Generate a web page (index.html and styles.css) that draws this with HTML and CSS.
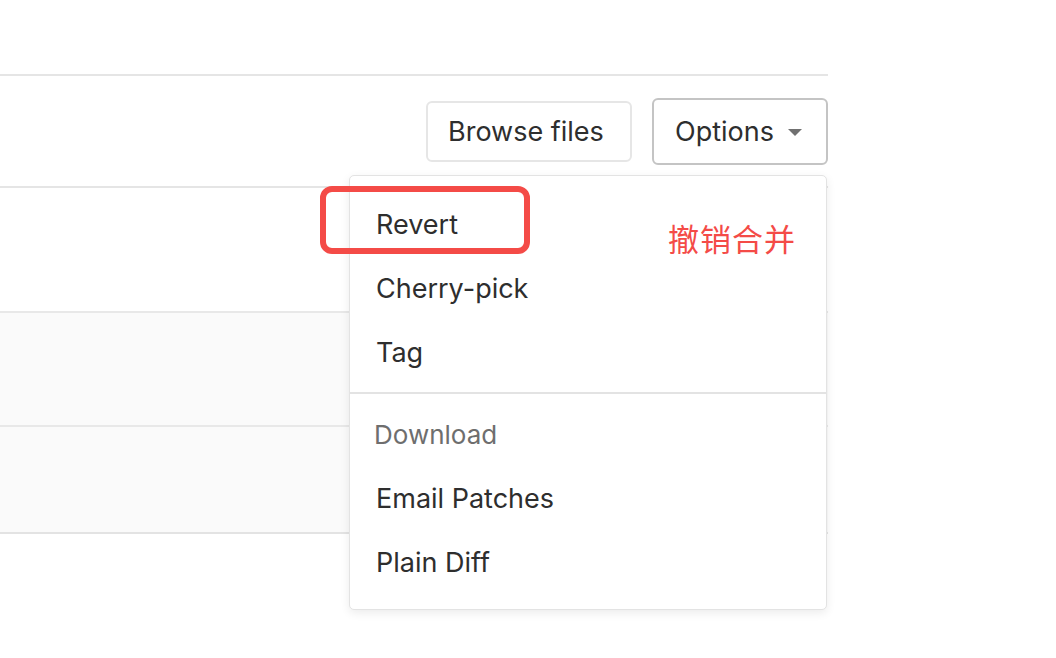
FILE: index.html
```html
<!DOCTYPE html>
<html lang="en">
<head>
<meta charset="utf-8">
<link rel="stylesheet" href="styles.css">
</head>
<body>
<div class="page">
  <div class="topbar"></div>
  <div class="toolbar">
    <button class="btn btn-browse">Browse files</button>
    <button class="btn btn-options">Options <span class="caret"></span></button>
  </div>
  <div class="row row-white"></div>
  <div class="row row-gray row-a"></div>
  <div class="row row-gray row-b"></div>

  <div class="dropdown">
    <ul class="menu">
      <li class="item">Revert</li>
      <li class="item">Cherry-pick</li>
      <li class="item">Tag</li>
    </ul>
    <div class="divider"></div>
    <ul class="menu">
      <li class="header">Download</li>
      <li class="item">Email Patches</li>
      <li class="item">Plain Diff</li>
    </ul>
  </div>

  <div class="highlight"></div>
  <div class="note">撤销合并</div>
</div>
</body>
</html>
```

FILE: styles.css
```css
html, body {
  margin: 0;
  padding: 0;
  background: #ffffff;
}
body {
  font-family: Inter, "Noto Sans", "Liberation Sans", sans-serif;
  color: #2e2e2e;
  width: 1056px;
  height: 658px;
  overflow: hidden;
}
.page {
  position: relative;
  width: 828px;
}
.topbar {
  height: 74px;
  border-bottom: 2px solid #e5e5e5;
}
.toolbar {
  display: flex;
  justify-content: flex-end;
  align-items: center;
  gap: 20px;
  height: 110px;
  border-bottom: 2px solid #e5e5e5;
}
.btn {
  font-family: inherit;
  font-size: 27px;
  color: #2e2e2e;
  background: #fff;
  border-radius: 6px;
  cursor: pointer;
  display: flex;
  align-items: center;
  margin: 0;
}
.btn-browse {
  width: 206px;
  height: 61px;
  border: 2px solid #e6e6e6;
  padding: 0 0 0 20px;
}
.btn-options {
  width: 176px;
  height: 67px;
  border: 2px solid #c4c4c4;
  padding: 0 0 0 21px;
}
.caret {
  display: inline-block;
  width: 0;
  height: 0;
  border-left: 7px solid transparent;
  border-right: 7px solid transparent;
  border-top: 7px solid #707070;
  margin-left: 14px;
  margin-top: 2px;
}
.row {
  border-bottom: 2px solid #e8e8e8;
}
.row-white {
  height: 123px;
}
.row-gray {
  background: #fafafa;
}
.row-a {
  height: 112px;
}
.row-b {
  height: 105px;
  border-bottom-color: #e3e3e3;
}
.dropdown {
  position: absolute;
  left: 349px;
  top: 175px;
  width: 476px;
  height: 417px;
  background: #fff;
  border: 1px solid #e3e3e3;
  border-radius: 5px;
  box-shadow: 0 3px 10px rgba(0, 0, 0, 0.08);
  padding-top: 16px;
  box-sizing: content-box;
}
.menu {
  list-style: none;
  margin: 0;
  padding: 0;
}
.item, .header {
  height: 64px;
  display: flex;
  align-items: center;
  padding-left: 26px;
  font-size: 27px;
  color: #2e2e2e;
}
.header {
  padding-left: 24px;
  font-size: 26px;
  color: #6e6e6e;
}
.divider {
  height: 2px;
  background: #e3e3e3;
  margin: 8px 0;
}
.highlight {
  position: absolute;
  left: 320px;
  top: 186px;
  width: 210px;
  height: 68px;
  box-sizing: border-box;
  border: 6px solid #f44b47;
  border-radius: 12px;
}
.note {
  position: absolute;
  left: 668px;
  top: 218px;
  font-family: "Noto Sans CJK SC", "Noto Sans", sans-serif;
  font-size: 31px;
  line-height: 40px;
  color: #f44b47;
  letter-spacing: 1px;
}
```
